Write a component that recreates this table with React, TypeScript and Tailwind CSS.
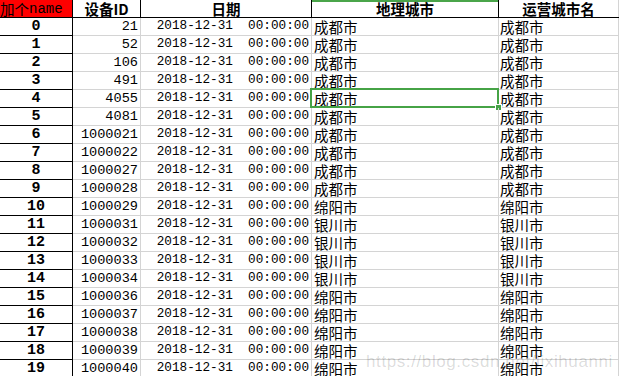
const rows: [string, string][] = [
  ["21", "成都市"],
  ["52", "成都市"],
  ["106", "成都市"],
  ["491", "成都市"],
  ["4055", "成都市"],
  ["4081", "成都市"],
  ["1000021", "成都市"],
  ["1000022", "成都市"],
  ["1000027", "成都市"],
  ["1000028", "成都市"],
  ["1000029", "绵阳市"],
  ["1000031", "银川市"],
  ["1000032", "银川市"],
  ["1000033", "银川市"],
  ["1000034", "银川市"],
  ["1000036", "绵阳市"],
  ["1000037", "绵阳市"],
  ["1000038", "绵阳市"],
  ["1000039", "绵阳市"],
  ["1000040", "绵阳市"],
];

const cjk = "font-['Noto_Sans_CJK_SC',sans-serif]";
const mono = "font-['Liberation_Mono','Noto_Sans_CJK_SC',monospace]";

export default function App() {
  return (
    <div className="relative h-[376px] w-[619px] overflow-hidden bg-white text-black">
      {/* header */}
      <div className="flex h-[18px] border-b border-black">
        <div className={`flex w-[73px] items-center overflow-hidden border-r border-black bg-[#ff0000] text-[14.5px] leading-[16px] ${cjk}`}>
          加个<span className={`${mono} text-[14px]`}>name</span>
        </div>
        <div className={`flex w-[68px] items-center justify-center border-r border-black text-[14.5px] font-bold leading-[16px] ${cjk}`}>
          设备ID
        </div>
        <div className={`flex w-[171px] items-center justify-center border-r border-black text-[14.5px] font-bold leading-[16px] ${cjk}`}>
          日期
        </div>
        <div className={`flex w-[187px] items-center justify-center border-r border-black text-[14.5px] font-bold leading-[16px] shadow-[inset_0_2px_0_#4aa54a] ${cjk}`}>
          地理城市
        </div>
        <div className={`flex w-[120px] items-center justify-center border-r border-[#d4d4d4] text-[14.5px] font-bold leading-[16px] ${cjk}`}>
          运营城市名
        </div>
      </div>

      {/* rows */}
      {rows.map(([id, city], i) => (
        <div key={i} className="flex h-[18px]">
          <div className={`flex w-[73px] items-center justify-center border-r border-b border-black text-[15px] font-bold leading-none ${mono}`}>
            {i}
          </div>
          <div className={`flex w-[68px] items-center justify-end border-r border-b border-[#d4d4d4] pr-[2px] text-[13.6px] leading-none ${mono}`}>
            {id}
          </div>
          <div className={`flex w-[171px] items-center justify-end whitespace-pre border-r border-b border-[#d4d4d4] pr-[2px] text-[12.7px] leading-none ${mono}`}>
            2018-12-31  00:00:00
          </div>
          <div className={`relative flex w-[187px] items-center border-r border-b border-[#d4d4d4] pl-[2px] text-[14.5px] leading-[16px] ${cjk}`}>
            {city}
            {i === 4 && (
              <>
                <div className="pointer-events-none absolute -left-[2px] -top-[2px] h-[20px] w-[189px] border-[2.5px] border-[#46a346]" />
                <div className="pointer-events-none absolute -bottom-[3px] -right-[3px] h-[5px] w-[5px] bg-[#46a346] ring-1 ring-white" />
              </>
            )}
          </div>
          <div className={`flex w-[120px] items-center border-r border-b border-[#d4d4d4] pl-[1px] text-[14.5px] leading-[16px] ${cjk}`}>
            {city}
          </div>
        </div>
      ))}

      <div className="pointer-events-none absolute left-[366px] top-[349px] font-['Liberation_Sans',sans-serif] text-[17px] tracking-[0.6px] text-black/15">
        https://blog.csdn.net/lixihuanni
      </div>
    </div>
  );
}
